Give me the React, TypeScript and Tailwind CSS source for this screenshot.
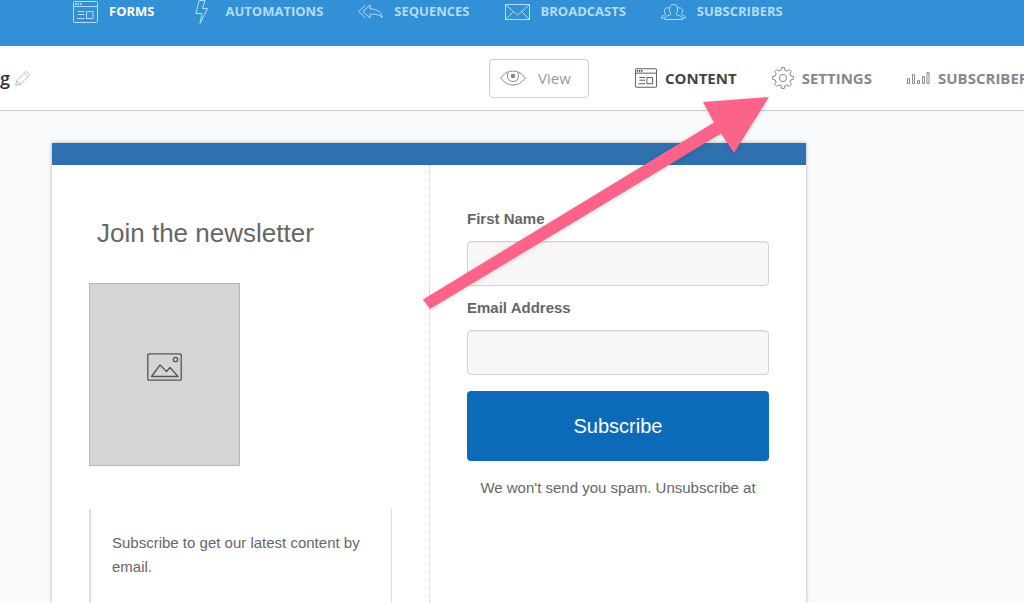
import type { ReactNode } from 'react';

interface NavItem {
  label: string;
  icon: ReactNode;
  active?: boolean;
}

function WindowIcon({ className }: { className: string }) {
  return (
    <svg className={className} viewBox="0 0 25 22" fill="none" stroke="currentColor" aria-hidden="true">
      <rect x="0.5" y="0.5" width="24" height="21" rx="1" />
      <path d="M0.5 5.5h24" />
      <path d="M2 3h1.5M4.5 3H6M7 3h1.5" strokeWidth="2" />
      <path d="M5 10.5h6.5M5 13.5h6.5M4 17.5h7.5M13.5 10.5h6.5v7h-6.5z" />
    </svg>
  );
}

function BoltIcon() {
  return (
    <svg className="h-6 w-[25px]" viewBox="0 0 25 24" fill="none" stroke="currentColor" strokeLinejoin="round" aria-hidden="true">
      <path d="M10 0.500h6L13.500 8.500h5L11 23.500l2-10H7z" />
    </svg>
  );
}

function ReplyAllIcon() {
  return (
    <svg className="h-4 w-[25px]" viewBox="0 0 25 16" fill="none" stroke="currentColor" strokeLinejoin="round" aria-hidden="true">
      <path d="M7.500 1L0.700 7.500l6.800 6.500" />
      <path d="M12 1L5 7.500l7 6.500v-3.800c5-.4 9 .2 12.300 3.300C23.500 7.500 18 4.800 12 4.800z" />
    </svg>
  );
}

function MailIcon() {
  return (
    <svg className="h-4 w-[25px]" viewBox="0 0 25 16" fill="none" stroke="currentColor" aria-hidden="true">
      <rect x="0.5" y="0.5" width="24" height="15" />
      <path d="M1 1l11.500 10L24 1M1 15l7.500-7.500M24 15l-7.500-7.500" />
    </svg>
  );
}

function PeopleIcon() {
  return (
    <svg className="h-4 w-[25px]" viewBox="0 0 25 16" fill="none" stroke="currentColor" strokeLinejoin="round" aria-hidden="true">
      <path d="M3.500 15.500c0-2.500 1.300-3.200 3.300-3.700s3-.8 3-1.800C8.700 8.500 8.500 6.500 8.500 4.500c0-2.500 1.500-4 4-4s4 1.500 4 4c0 2-.2 4-1.300 5.500 0 1 1 1.300 3 1.800s3.300 1.200 3.300 3.700z" />
      <path d="M8.500 4.200C5.500 3 3.500 4.500 3.500 7c0 1.500.2 2 .9 3 0 1-.7 1.200-1.900 1.500S.5 12.500.5 14H4" />
      <path d="M16.500 4.200c3-1.200 5 .3 5 2.800 0 1.500-.2 2-.9 3 0 1 .7 1.200 1.900 1.500s2 1 2 2.500H21" />
    </svg>
  );
}

function PencilIcon() {
  return (
    <svg className="size-[15px]" viewBox="0 0 15 15" fill="none" stroke="currentColor" strokeWidth="0.8" strokeLinejoin="round" aria-hidden="true">
      <path d="M0.700 14.300l1-4.500L10.500 1l1-.5 3 3-.5 1-8.800 8.800zM1.700 9.800l3.500 3.500M9.300 2.200l3.500 3.500" />
    </svg>
  );
}

function EyeIcon() {
  return (
    <svg className="h-4 w-[26px] text-[#888]" viewBox="0 0 26 16" fill="none" stroke="currentColor" aria-hidden="true">
      <path d="M0.700 8C4 3.500 8 1 13 1s9 2.500 12.300 7C22 12.500 18 15 13 15S4 12.500 0.700 8z" />
      <path d="M8 2.200C6.500 8 8.500 11.500 13 11.500S19.500 8 18 2.200" />
      <circle cx="13" cy="6" r="2.300" fill="currentColor" stroke="none" />
    </svg>
  );
}

function GearIcon() {
  return (
    <svg className="size-[22px]" viewBox="0 0 22 22" fill="none" stroke="currentColor" strokeLinejoin="round" aria-hidden="true">
      <circle cx="11" cy="11" r="3.600" />
      <path d="M9.540 0.600H12.460L12.940 3.240Q14 3.500 15.120 4.140L17.320 2.610 19.390 4.680 17.860 6.880Q18.500 8 18.760 9.060L21.400 9.540V12.460L18.760 12.940Q18.500 14 17.860 15.120L19.390 17.320 17.320 19.390 15.120 17.860Q14 18.500 12.940 18.760L12.460 21.400H9.540L9.060 18.760Q8 18.500 6.880 17.860L4.680 19.390 2.610 17.320 4.140 15.120Q3.500 14 3.240 12.940L0.600 12.460V9.540L3.240 9.060Q3.500 8 4.140 6.880L2.610 4.680 4.680 2.610 6.880 4.140Q8 3.500 9.060 3.240z" />
    </svg>
  );
}

function BarsIcon() {
  return (
    <svg className="h-3 w-[23px]" viewBox="0 0 23 12" fill="none" stroke="currentColor" aria-hidden="true">
      <path d="M0.500 6.500h2v5h-2zM5.500 2.500h2v9h-2zM10.500 8.500h2v3h-2zM15.500 4.500h2v7h-2zM20 .5h2v11h-2z" />
    </svg>
  );
}

function ImageIcon() {
  return (
    <svg className="h-7 w-[35px] text-[#555]" viewBox="0 0 35 28" fill="none" stroke="currentColor" strokeWidth="1.300" strokeLinejoin="round" aria-hidden="true">
      <rect x="0.800" y="0.800" width="33.400" height="26.400" rx="1" />
      <circle cx="28.500" cy="6.500" r="2.200" />
      <path d="M4.500 23.500L13 12l6.500 6.500 3.500-4 8 9z" />
    </svg>
  );
}

// Pointer that runs from the form up to the settings tab
function Arrow() {
  return (
    <svg
      className="pointer-events-none absolute top-[97px] left-[423px] h-[214px] w-[347px] drop-shadow-sm"
      viewBox="0 0 347 214"
      fill="#fb6488"
      aria-hidden="true"
    >
      <path d="M0 202.500L291 25.500 280 5 346 0 311 56 298 36.500 7 212z" />
    </svg>
  );
}

const mainNav: NavItem[] = [
  { label: 'FORMS', icon: <WindowIcon className="h-[22px] w-[25px]" />, active: true },
  { label: 'AUTOMATIONS', icon: <BoltIcon /> },
  { label: 'SEQUENCES', icon: <ReplyAllIcon /> },
  { label: 'BROADCASTS', icon: <MailIcon /> },
  { label: 'SUBSCRIBERS', icon: <PeopleIcon /> },
];

const formTabs: NavItem[] = [
  { label: 'CONTENT', icon: <WindowIcon className="h-5 w-[22px]" />, active: true },
  { label: 'SETTINGS', icon: <GearIcon /> },
  { label: 'SUBSCRIBERS', icon: <BarsIcon /> },
];

function Field({ id, label, type }: { id: string; label: string; type: string }) {
  return (
    <div>
      <label htmlFor={id} className="block text-[15px] leading-5 font-bold text-[#666]">
        {label}
      </label>
      <input
        id={id}
        type={type}
        className="mt-3 block h-[45px] w-full rounded border border-[#d2d2d2] bg-[#f8f6f7] px-3 inset-shadow-2xs"
      />
    </div>
  );
}

export default function App() {
  return (
    <div className="relative flex min-h-screen flex-col overflow-hidden bg-[#f8fafc] font-['Open_Sans',sans-serif]">
      <nav className="flex h-[46px] shrink-0 gap-[35px] bg-[#3190d6] pl-[73px]">
        {mainNav.map((item) => (
          <a
            key={item.label}
            href="#"
            className={`flex h-6 items-center gap-[11px] text-[13px] leading-5 font-bold ${
              item.active ? 'text-white' : 'text-[#b5dcf8]'
            }`}
          >
            <span className="text-[#b5dcf8]">{item.icon}</span>
            <span className="pb-0.5">{item.label}</span>
          </a>
        ))}
      </nav>

      <header className="flex h-[65px] shrink-0 items-center border-b border-[#ccc] bg-white">
        <div className="flex flex-1 items-center gap-[5px]">
          <h1 className="text-lg font-semibold text-[#333]">g</h1>
          <button type="button" aria-label="Rename" className="text-[#aaa]">
            <PencilIcon />
          </button>
        </div>
        <button
          type="button"
          className="flex h-[39px] w-[100px] shrink-0 items-center gap-3 rounded border border-[#ccc] pl-2.5 text-[15px] text-[#999]"
        >
          <EyeIcon />
          View
        </button>
        <nav className="-mr-[13px] ml-[46px] flex shrink-0 gap-[35px]">
          {formTabs.map((item) => (
            <a
              key={item.label}
              href="#"
              className={`flex items-center gap-2 text-[15px] font-bold ${
                item.active ? 'text-[#444]' : 'text-[#888]'
              }`}
            >
              {item.icon}
              {item.label}
            </a>
          ))}
        </nav>
      </header>

      <main className="mt-8 mr-[218px] ml-[52px] flex flex-1 flex-col border-t-[22px] border-[#2f70af] bg-white font-['Liberation_Sans',sans-serif] text-[#666] shadow-[0_0_4px_rgba(0,0,0,0.3)]">
        <div className="grid flex-1 grid-cols-2">
          <section className="flex flex-col px-[37px] pt-[50px]">
            <h2 className="pl-2 text-[26px] leading-9">Join the newsletter</h2>
            <div className="mt-8 flex h-[183px] w-[151px] items-center justify-center border border-[#b5b5b5] bg-[#d5d5d5] pb-4">
              <ImageIcon />
            </div>
            <div className="mt-[43px] flex-1 border-r border-l-2 border-[#ddd] px-[21px] pt-[22px]">
              <p className="text-[15px] leading-6">Subscribe to get our latest content by email.</p>
            </div>
          </section>

          <form className="border-l border-dotted border-[#ccc] px-[37px] pt-11">
            <div className="space-y-3">
              <Field id="first-name" label="First Name" type="text" />
              <Field id="email" label="Email Address" type="email" />
            </div>
            <button type="button" className="mt-4 block h-[70px] w-full rounded bg-[#0c6bb9] text-xl text-white">
              Subscribe
            </button>
            <p className="mt-4 text-center text-[15px] leading-[22px]">We won't send you spam. Unsubscribe at</p>
          </form>
        </div>
      </main>

      <Arrow />
    </div>
  );
}
